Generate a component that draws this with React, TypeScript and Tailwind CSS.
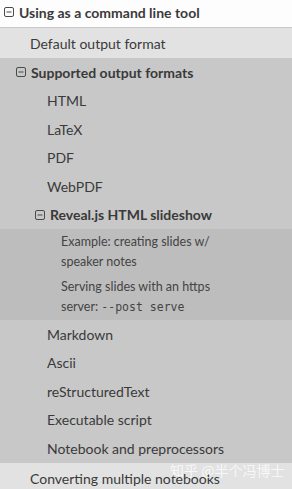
import type { ReactNode } from "react";

function Toggle() {
  return (
    <svg width="10" height="10" viewBox="0 0 10 10" className="shrink-0">
      <rect x="0.5" y="0.5" width="9" height="9" rx="1.5" fill="none" stroke="#4a4a4a" strokeWidth="1" />
      <line x1="2.5" y1="5" x2="7.5" y2="5" stroke="#4a4a4a" strokeWidth="1" />
    </svg>
  );
}

function Row({
  pl,
  bold = false,
  toggle = false,
  children,
}: {
  pl: string;
  bold?: boolean;
  toggle?: boolean;
  children: ReactNode;
}) {
  return (
    <div className={`flex h-[28.5px] items-center gap-[5px] ${pl} ${bold ? "font-bold" : ""}`}>
      {toggle && <Toggle />}
      <span>{children}</span>
    </div>
  );
}

export default function App() {
  return (
    <div className="relative h-[489px] w-[292px] overflow-hidden font-['Lato','Liberation_Sans',sans-serif] text-[14px] text-[#3a3a3a]">
      <div className="flex h-[28px] items-center gap-[5px] border-b border-[#c9c9c9] bg-[#fdfdfd] pl-[4px] pb-[3px] font-bold">
        <Toggle />
        <span>Using as a command line tool</span>
      </div>

      <div className="flex h-[30px] items-center bg-[#e2e2e2] pl-[30px]">Default output format</div>

      <div className="bg-[#c8c8c8]">
        <Row pl="pl-[16px]" bold toggle>
          Supported output formats
        </Row>
        <Row pl="pl-[47px]">HTML</Row>
        <Row pl="pl-[47px]">LaTeX</Row>
        <Row pl="pl-[47px]">PDF</Row>
        <Row pl="pl-[47px]">WebPDF</Row>
        <Row pl="pl-[35px]" bold toggle>
          Reveal.js HTML slideshow
        </Row>

        <div className="bg-[#bdbdbd] text-[12.5px] leading-[20px] text-[#444]">
          <div className="flex h-[45.5px] items-center pl-[61px] pr-[60px]">
            Example: creating slides w/ speaker notes
          </div>
          <div className="flex h-[45.5px] items-center pl-[61px] pr-[60px]">
            <span>
              Serving slides with an https server:{" "}
              <code className="font-['DejaVu_Sans_Mono',monospace] text-[11.5px]">--post serve</code>
            </span>
          </div>
        </div>

        <Row pl="pl-[47px]">Markdown</Row>
        <Row pl="pl-[47px]">Ascii</Row>
        <Row pl="pl-[47px]">reStructuredText</Row>
        <Row pl="pl-[47px]">Executable script</Row>
        <Row pl="pl-[47px]">Notebook and preprocessors</Row>
      </div>

      <div className="flex h-[30px] items-center bg-[#e2e2e2] pl-[30px] pt-[2px]">Converting multiple notebooks</div>

      <div className="absolute left-[170px] top-[460px] font-['Noto_Sans_CJK_SC',sans-serif] text-[14px] text-white/75">
        知乎 @半个冯博士
      </div>
    </div>
  );
}
